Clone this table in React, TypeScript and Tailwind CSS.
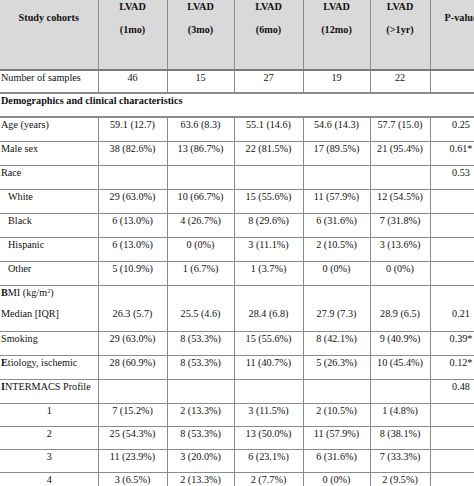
import React from "react";

type Row = {
  label: React.ReactNode;
  values: string[];
  p?: string;
  indent?: boolean;
  center?: boolean;
};

const widths = [98, 69, 67, 69, 67, 60, 62];

const headers = ["(1mo)", "(3mo)", "(6mo)", "(12mo)", "(>1yr)"];

const top: Row[] = [
  { label: "Age (years)", values: ["59.1 (12.7)", "63.6 (8.3)", "55.1 (14.6)", "54.6 (14.3)", "57.7 (15.0)"], p: "0.25" },
  { label: "Male sex", values: ["38 (82.6%)", "13 (86.7%)", "22 (81.5%)", "17 (89.5%)", "21 (95.4%)"], p: "0.61*" },
  { label: "Race", values: ["", "", "", "", ""], p: "0.53" },
  { label: "White", indent: true, values: ["29 (63.0%)", "10 (66.7%)", "15 (55.6%)", "11 (57.9%)", "12 (54.5%)"] },
  { label: "Black", indent: true, values: ["6 (13.0%)", "4 (26.7%)", "8 (29.6%)", "6 (31.6%)", "7 (31.8%)"] },
  { label: "Hispanic", indent: true, values: ["6 (13.0%)", "0 (0%)", "3 (11.1%)", "2 (10.5%)", "3 (13.6%)"] },
  { label: "Other", indent: true, values: ["5 (10.9%)", "1 (6.7%)", "1 (3.7%)", "0 (0%)", "0 (0%)"] },
];

const bottom: Row[] = [
  { label: "Smoking", values: ["29 (63.0%)", "8 (53.3%)", "15 (55.6%)", "8 (42.1%)", "9 (40.9%)"], p: "0.39*" },
  { label: <><b>E</b>tiology, ischemic</>, values: ["28 (60.9%)", "8 (53.3%)", "11 (40.7%)", "5 (26.3%)", "10 (45.4%)"], p: "0.12*" },
  { label: <><b>I</b>NTERMACS Profile</>, values: ["", "", "", "", ""], p: "0.48" },
];

const profiles: Row[] = [
  { label: "1", center: true, values: ["7 (15.2%)", "2 (13.3%)", "3 (11.5%)", "2 (10.5%)", "1 (4.8%)"] },
  { label: "2", center: true, values: ["25 (54.3%)", "8 (53.3%)", "13 (50.0%)", "11 (57.9%)", "8 (38.1%)"] },
  { label: "3", center: true, values: ["11 (23.9%)", "3 (20.0%)", "6 (23.1%)", "6 (31.6%)", "7 (33.3%)"] },
  { label: "4", center: true, values: ["3 (6.5%)", "2 (13.3%)", "2 (7.7%)", "0 (0%)", "2 (9.5%)"] },
];

const cell = "border border-[#8c8c8c] align-top pt-0 leading-[13px] text-center whitespace-nowrap";

function DataRow({ row, tight }: { row: Row; tight?: boolean }) {
  return (
    <tr className={tight ? "h-[23px]" : "h-[24px]"}>
      <td
        className={`${cell} border-l-0 ${row.center ? "text-center" : "text-left"} ${row.indent ? "pl-[8px]" : "pl-[1px]"}`}
      >
        {row.label}
      </td>
      {row.values.map((v, i) => (
        <td key={i} className={cell}>
          {v}
        </td>
      ))}
      <td className={cell}>{row.p ?? ""}</td>
    </tr>
  );
}

export default function App() {
  return (
    <div className="w-[474px] h-[486px] overflow-hidden bg-white text-[#111] [font-family:'Liberation_Serif',serif] text-[10.2px]">
      <table className="border-collapse table-fixed w-[492px]">
        <colgroup>
          {widths.map((w, i) => (
            <col key={i} style={{ width: w }} />
          ))}
        </colgroup>
        <thead>
          <tr className="h-[70px] bg-[#d9d9d9] font-bold">
            <th className="border border-t-0 border-l-0 border-[#8c8c8c] border-b-2 border-b-[#7a7a7a] align-top pt-[11px] leading-[13px]">
              Study cohorts
            </th>
            {headers.map((h) => (
              <th
                key={h}
                className="border border-t-0 border-[#8c8c8c] border-b-2 border-b-[#7a7a7a] align-top leading-[13px]"
              >
                <div className="flex flex-col items-center gap-[10px]">
                  <span>LVAD</span>
                  <span>{h}</span>
                </div>
              </th>
            ))}
            <th className="border border-t-0 border-[#8c8c8c] border-b-2 border-b-[#7a7a7a] align-top pt-[11px] leading-[13px] whitespace-nowrap">
              P-value
            </th>
          </tr>
        </thead>
        <tbody>
          <tr className="h-[23px]">
            <td className={`${cell} border-l-0 text-left pl-[1px]`}>Number of samples</td>
            {["46", "15", "27", "19", "22"].map((v) => (
              <td key={v} className={cell}>
                {v}
              </td>
            ))}
            <td className={cell}></td>
          </tr>
          <tr className="h-[24px]">
            <td
              colSpan={7}
              className="border-y-2 border-y-[#8c8c8c] align-top pt-0 leading-[13px] text-left pl-[1px] font-bold"
            >
              Demographics and clinical characteristics
            </td>
          </tr>
          {top.map((r, i) => (
            <DataRow key={i} row={r} />
          ))}
          <tr className="h-[46px]">
            <td className={`${cell} border-l-0 text-left pl-[1px]`}>
              <div>
                <b>B</b>MI (kg/m<sup className="text-[6px]">2</sup>)
              </div>
              <div className="mt-[8px]">Median [IQR]</div>
            </td>
            {["26.3 (5.7)", "25.5 (4.6)", "28.4 (6.8)", "27.9 (7.3)", "28.9 (6.5)", "0.21"].map((v) => (
              <td key={v} className={`${cell} pt-[21px]`}>
                {v}
              </td>
            ))}
          </tr>
          {bottom.map((r, i) => (
            <DataRow key={i} row={r} />
          ))}
          {profiles.map((r, i) => (
            <DataRow key={i} row={r} tight />
          ))}
        </tbody>
      </table>
    </div>
  );
}
